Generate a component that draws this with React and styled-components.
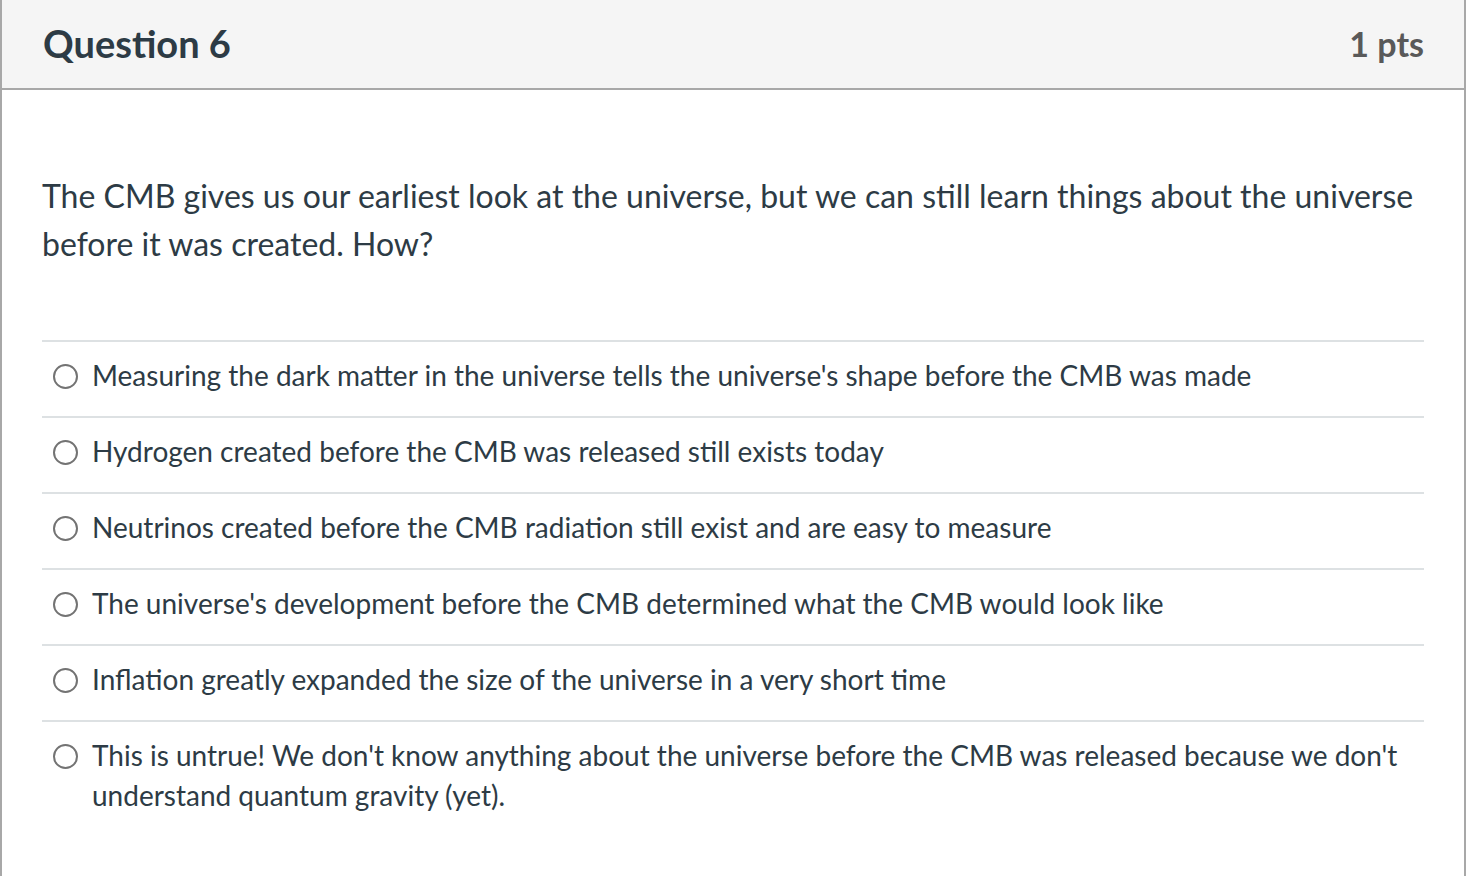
import React from "react";
import styled, { createGlobalStyle } from "styled-components";

const Global = createGlobalStyle`
  html, body { margin: 0; padding: 0; background: #fff; }
  body { font-family: Lato, "Open Sans", sans-serif; color: #2d3b45; }
`;

const Panel = styled.div`
  width: 1466px;
  height: 876px;
  box-sizing: border-box;
  border-left: 2px solid #a8a8a8;
  border-right: 2px solid #a8a8a8;
  overflow: hidden;
`;

const Header = styled.div`
  height: 90px;
  box-sizing: border-box;
  background: #f5f5f5;
  border-bottom: 2px solid #a8a8a8;
  display: flex;
  align-items: center;
  justify-content: space-between;
  padding: 0 40px 2px 41px;
`;

const Title = styled.h2`
  margin: 0;
  font-size: 38px;
  font-weight: 700;
  color: #2d3b45;
`;

const Points = styled.div`
  font-size: 34px;
  font-weight: 700;
  color: #595959;
`;

const Body = styled.div`
  padding: 82px 40px 0 40px;
`;

const QuestionText = styled.p`
  margin: 0 0 72px 0;
  font-size: 32px;
  line-height: 48px;
`;

const Answers = styled.div`
  border-top: 2px solid #dde1e3;
`;

const Answer = styled.label`
  display: flex;
  align-items: flex-start;
  gap: 14px;
  padding: 13px 0 21px 10px;
  border-bottom: ${(p) => (p.last ? "none" : "2px solid #dde1e3")};
  font-size: 28px;
  line-height: 40px;
`;

const Radio = styled.span`
  flex: none;
  width: 21px;
  height: 21px;
  margin: 9px 0 0 1px;
  border: 2px solid #737373;
  border-radius: 50%;
  background: #fff;
`;

const answers = [
  "Measuring the dark matter in the universe tells the universe's shape before the CMB was made",
  "Hydrogen created before the CMB was released still exists today",
  "Neutrinos created before the CMB radiation still exist and are easy to measure",
  "The universe's development before the CMB determined what the CMB would look like",
  "Inflation greatly expanded the size of the universe in a very short time",
  "This is untrue! We don't know anything about the universe before the CMB was released because we don't understand quantum gravity (yet).",
];

export default function App() {
  return (
    <>
      <Global />
      <Panel>
        <Header>
          <Title>Question 6</Title>
          <Points>1 pts</Points>
        </Header>
        <Body>
          <QuestionText>
            The CMB gives us our earliest look at the universe, but we can still learn things about the universe before it was created. How?
          </QuestionText>
          <Answers>
            {answers.map((a, i) => (
              <Answer key={i} last={i === answers.length - 1}>
                <Radio />
                <span>{a}</span>
              </Answer>
            ))}
          </Answers>
        </Body>
      </Panel>
    </>
  );
}
